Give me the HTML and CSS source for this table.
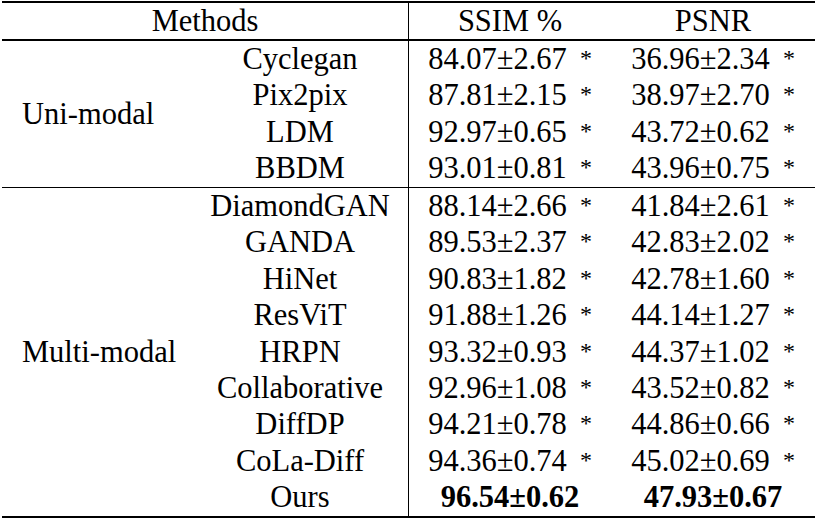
FILE: index.html
```html
<!DOCTYPE html>
<html>
<head>
<meta charset="utf-8">
<link rel="stylesheet" href="styles.css">
</head>
<body>
<div class="table">
  <div class="cell head span2">Methods</div>
  <div class="cell head metric">SSIM %</div>
  <div class="cell head">PSNR</div>
  <div class="hline"></div>

  <div class="cell group uni">Uni-modal</div>
  <div class="cell method">Cyclegan</div>
  <div class="cell metric">84.07±2.67<span class="ast">*</span></div>
  <div class="cell">36.96±2.34<span class="ast">*</span></div>
  <div class="cell method">Pix2pix</div>
  <div class="cell metric">87.81±2.15<span class="ast">*</span></div>
  <div class="cell">38.97±2.70<span class="ast">*</span></div>
  <div class="cell method">LDM</div>
  <div class="cell metric">92.97±0.65<span class="ast">*</span></div>
  <div class="cell">43.72±0.62<span class="ast">*</span></div>
  <div class="cell method">BBDM</div>
  <div class="cell metric">93.01±0.81<span class="ast">*</span></div>
  <div class="cell">43.96±0.75<span class="ast">*</span></div>
  <div class="hline thin"></div>

  <div class="cell group multi">Multi-modal</div>
  <div class="cell method">DiamondGAN</div>
  <div class="cell metric">88.14±2.66<span class="ast">*</span></div>
  <div class="cell">41.84±2.61<span class="ast">*</span></div>
  <div class="cell method">GANDA</div>
  <div class="cell metric">89.53±2.37<span class="ast">*</span></div>
  <div class="cell">42.83±2.02<span class="ast">*</span></div>
  <div class="cell method">HiNet</div>
  <div class="cell metric">90.83±1.82<span class="ast">*</span></div>
  <div class="cell">42.78±1.60<span class="ast">*</span></div>
  <div class="cell method">ResViT</div>
  <div class="cell metric">91.88±1.26<span class="ast">*</span></div>
  <div class="cell">44.14±1.27<span class="ast">*</span></div>
  <div class="cell method">HRPN</div>
  <div class="cell metric">93.32±0.93<span class="ast">*</span></div>
  <div class="cell">44.37±1.02<span class="ast">*</span></div>
  <div class="cell method">Collaborative</div>
  <div class="cell metric">92.96±1.08<span class="ast">*</span></div>
  <div class="cell">43.52±0.82<span class="ast">*</span></div>
  <div class="cell method">DiffDP</div>
  <div class="cell metric">94.21±0.78<span class="ast">*</span></div>
  <div class="cell">44.86±0.66<span class="ast">*</span></div>
  <div class="cell method">CoLa-Diff</div>
  <div class="cell metric">94.36±0.74<span class="ast">*</span></div>
  <div class="cell">45.02±0.69<span class="ast">*</span></div>
  <div class="cell method">Ours</div>
  <div class="cell metric bold">96.54±0.62</div>
  <div class="cell bold">47.93±0.67</div>
</div>
</body>
</html>
```

FILE: styles.css
```css
html, body {
  margin: 0;
  padding: 0;
  background: #fff;
}

.table {
  margin: 1px 0 0 2px;
  width: 813px;
  display: grid;
  grid-template-columns: 190px 217px 202px 204px;
  grid-template-rows: 36px 2px repeat(4, 36.4px) 1.5px repeat(9, 36.4px);
  border-top: 2px solid #000;
  border-bottom: 2px solid #000;
  font-family: "Liberation Serif", "Times New Roman", serif;
  font-size: 30.5px;
  color: #000;
}

.cell {
  display: flex;
  align-items: center;
  justify-content: center;
  line-height: 1;
  white-space: nowrap;
}

.span2 {
  grid-column: 1 / 3;
  border-right: 1.5px solid #000;
}

.method {
  grid-column: 2;
  border-right: 1.5px solid #000;
}

.group {
  grid-column: 1;
  justify-content: flex-start;
  padding-left: 20px;
}

.uni {
  grid-row: 3 / 7;
}

.multi {
  grid-row: 8 / 17;
}

.hline {
  grid-column: 1 / -1;
  background: #000;
}

.ast {
  margin-left: 13px;
  font-size: 24px;
  align-self: flex-start;
  margin-top: 5px;
}

.bold {
  font-weight: bold;
}
```
